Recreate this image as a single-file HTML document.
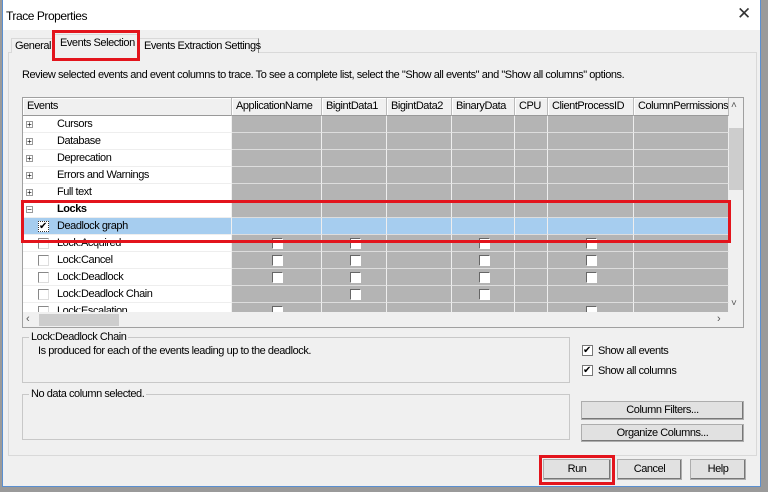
<!DOCTYPE html>
<html><head><style>
*{box-sizing:border-box;margin:0;padding:0}
body{width:768px;height:492px;background:#9a9a9a;position:relative;overflow:hidden;font-family:"Liberation Sans",sans-serif;font-size:11px;letter-spacing:-0.45px;color:#000}
.a{position:absolute;white-space:nowrap}
.win{left:2px;top:0;width:759px;height:487px;background:#f0f0f0;border:1px solid #5a8fd0;border-top:none}
.cb{position:absolute;width:11px;height:11px;background:#fff;border:1px solid #888;border-right-color:#ddd;border-bottom-color:#ddd;letter-spacing:0}
.btn{position:absolute;background:#e1e1e1;border:1px solid #adadad;box-shadow:inset -1px -1px 0 #777;text-align:center;font-size:11px;white-space:nowrap}
.hd{position:absolute;top:0;height:18px;background:#f0f0f0;border-right:1px solid #bbb;border-bottom:1px solid #999;padding-left:4px;line-height:17px;white-space:nowrap;overflow:hidden;box-shadow:inset 1px 1px 0 #fff}
.row{position:absolute;left:0;height:17px;width:705px}
.ev{position:absolute;left:0;width:208px;height:17px;background:#fff;border-bottom:1px solid #eee;line-height:16px;white-space:nowrap}
.g{position:absolute;height:17px;background:#b4b4b4;border-right:1px solid #eee;border-bottom:1px solid #ddd}
.pm{position:absolute;left:3px;top:5px;width:7px;height:7px;border:1px solid #999;font-size:8px;line-height:5px;text-align:center;background:#fff;letter-spacing:0}
.red{position:absolute;border:3px solid #e3141c}
.gb{position:absolute;border:1px solid #c8c8c8}
.gbl{position:absolute;top:-7px;left:6px;background:#f0f0f0;padding:0 2px;white-space:nowrap}
</style></head><body>
<div class="a win"></div>
<div class="a" style="left:3px;top:0;width:757px;height:30px;background:#fff"></div>
<div class="a" style="left:6px;top:9px;font-size:12px">Trace Properties</div>
<div class="a" style="left:737px;top:4px;font-size:17px;color:#333">✕</div>
<!-- tabs -->
<div class="a" style="left:8px;top:52px;width:749px;height:404px;border:1px solid #d9d9d9;background:#f0f0f0"></div>
<div class="a" style="left:11px;top:38px;width:42px;height:15px;border:1px solid #d9d9d9;border-bottom:none;background:#f0f0f0;padding-left:3px;line-height:14px">General</div>
<div class="a" style="left:54px;top:34px;width:84px;height:19px;border:1px solid #d9d9d9;border-bottom:none;background:#f0f0f0;padding-left:5px;line-height:16px">Events Selection</div>
<div class="a" style="left:139px;top:38px;width:120px;height:15px;border:1px solid #d9d9d9;border-right:1px solid #888;border-bottom:none;background:#f0f0f0;padding-left:4px;line-height:14px">Events Extraction Settings</div>
<div class="red" style="left:52px;top:30px;width:88px;height:31px"></div>
<div class="a" style="left:22px;top:69px">Review selected events and event columns to trace. To see a complete list, select the "Show all events" and "Show all columns" options.</div>
<!-- grid -->
<div class="a" style="left:22px;top:97px;width:722px;height:231px;border:1px solid #a0a0a0;background:#f0f0f0;overflow:hidden">
 <div class="hd" style="left:0;width:209px">Events</div>
 <div class="hd" style="left:209px;width:90px">ApplicationName</div>
 <div class="hd" style="left:299px;width:65px">BigintData1</div>
 <div class="hd" style="left:364px;width:65px">BigintData2</div>
 <div class="hd" style="left:429px;width:63px">BinaryData</div>
 <div class="hd" style="left:492px;width:33px">CPU</div>
 <div class="hd" style="left:525px;width:86px">ClientProcessID</div>
 <div class="hd" style="left:611px;width:95px">ColumnPermissions</div>
 <div id="rows"></div>
 <!-- vscroll -->
 <div class="a" style="left:706px;top:0;width:14px;height:214px;background:#f0f0f0"></div>
 <div class="a" style="left:708px;top:2px;font-size:10px;color:#555">˄</div>
 <div class="a" style="left:706px;top:30px;width:14px;height:62px;background:#cdcdcd"></div>
 <div class="a" style="left:708px;top:200px;font-size:10px;color:#555">˅</div>
 <!-- hscroll -->
 <div class="a" style="left:0;top:214px;width:720px;height:16px;background:#f0f0f0"></div>
 <div class="a" style="left:3px;top:215px;font-size:11px;color:#555">‹</div>
 <div class="a" style="left:16px;top:216px;width:80px;height:12px;background:#cdcdcd"></div>
 <div class="a" style="left:694px;top:215px;font-size:11px;color:#555">›</div>
</div>
<div class="red" style="left:21px;top:200px;width:710px;height:43px"></div>
<!-- group boxes -->
<div class="gb" style="left:22px;top:337px;width:548px;height:46px"><span class="gbl">Lock:Deadlock Chain</span></div>
<div class="a" style="left:38px;top:345px">Is produced for each of the events leading up to the deadlock.</div>
<div class="gb" style="left:22px;top:394px;width:548px;height:46px"><span class="gbl">No data column selected.</span></div>
<div class="cb" style="left:582px;top:345px;border-color:#777;font-size:10px;line-height:9px">✔</div>
<div class="a" style="left:598px;top:345px">Show all events</div>
<div class="cb" style="left:582px;top:365px;border-color:#777;font-size:10px;line-height:9px">✔</div>
<div class="a" style="left:598px;top:365px">Show all columns</div>
<div class="btn" style="left:581px;top:401px;width:163px;height:19px;line-height:17px">Column Filters...</div>
<div class="btn" style="left:581px;top:424px;width:163px;height:18px;line-height:16px">Organize Columns...</div>
<div class="btn" style="left:543px;top:459px;width:68px;height:21px;line-height:19px">Run</div>
<div class="btn" style="left:617px;top:459px;width:65px;height:21px;line-height:19px">Cancel</div>
<div class="btn" style="left:690px;top:459px;width:56px;height:21px;line-height:19px">Help</div>
<div class="red" style="left:539px;top:455px;width:76px;height:30px"></div>
<script>
var cols=[[209,90],[299,65],[364,65],[429,63],[492,33],[525,86],[611,95]];
var rows=[["+","Cursors"],["+","Database"],["+","Deprecation"],["+","Errors and Warnings"],["+","Full text"],["−","Locks",1],["c","Deadlock graph",2],["b","Lock:Acquired"],["b","Lock:Cancel"],["b","Lock:Deadlock"],["b","Lock:Deadlock Chain"],["b","Lock:Escalation"]];
var chk={7:[0,1,3,5],8:[0,1,3,5],9:[0,1,3,5],10:[1,3],11:[0,5]};
var h="";
rows.forEach(function(r,i){
 var t=18+i*17;
 var sel=r[2]==2;
 h+='<div class="row" style="top:'+t+'px">';
 h+='<div class="ev" style="'+(sel?'background:#a6cdef':'')+'">';
 if(r[0]=="+"||r[0]=="−") h+='<div class="pm">'+r[0]+'</div>';
 if(r[0]=="c") h+='<div class="cb" style="left:15px;top:3px;border:1px dotted #333;font-size:10px;line-height:9px">✔</div>';
 if(r[0]=="b") h+='<div class="cb" style="left:15px;top:3px"></div>';
 h+='<span style="position:absolute;left:34px;'+(r[2]==1?'font-weight:bold':'')+'">'+r[1]+'</span></div>';
 cols.forEach(function(c,j){
  h+='<div class="g" style="left:'+c[0]+'px;width:'+c[1]+'px;'+(sel?'background:#a6cdef':'')+'">';
  if(chk[i]&&chk[i].indexOf(j)>=0) h+='<div class="cb" style="left:'+(Math.round(c[1]/2)-5)+'px;top:3px;border-color:#666 #fff #fff #666"></div>';
  h+='</div>';
 });
 h+='</div>';
});
document.getElementById("rows").innerHTML=h;
</script>
</body></html>
